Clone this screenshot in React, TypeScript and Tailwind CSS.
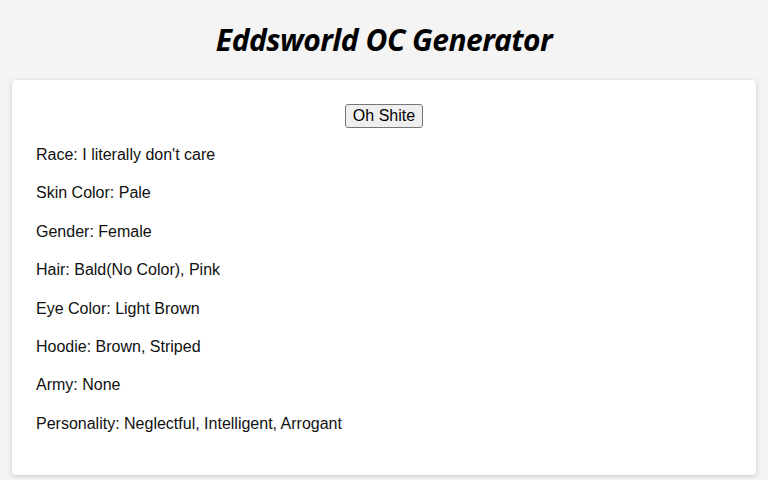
import React from "react";

const traits: [string, string][] = [
  ["Race", "I literally don't care"],
  ["Skin Color", "Pale"],
  ["Gender", "Female"],
  ["Hair", "Bald(No Color), Pink"],
  ["Eye Color", "Light Brown"],
  ["Hoodie", "Brown, Striped"],
  ["Army", "None"],
  ["Personality", "Neglectful, Intelligent, Arrogant"],
];

export default function App() {
  return (
    <div className="min-h-screen bg-[#f4f4f4] px-3 pt-[22px] pb-4 font-['Liberation_Sans',Arial,sans-serif] text-black">
      <h1 className="h-[36px] mb-[22px] text-center text-[30px] leading-[36px] font-bold italic font-['Noto_Sans','DejaVu_Sans',sans-serif] tracking-[-0.5px]">
        Eddsworld OC Generator
      </h1>
      <div className="bg-white rounded-[4px] shadow-[0_1px_4px_rgba(0,0,0,0.18)] px-6 py-6">
        <div className="flex justify-center">
          <button className="h-[24px] px-[7px] text-[16px] leading-[20px] bg-[#efefef] border border-[#767676] rounded-[3px] text-black">
            Oh Shite
          </button>
        </div>
        {traits.map(([k, v]) => (
          <p key={k} className="my-4 text-[16px] leading-[22.4px] text-[#111]">
            {k}: {v}
          </p>
        ))}
      </div>
    </div>
  );
}
